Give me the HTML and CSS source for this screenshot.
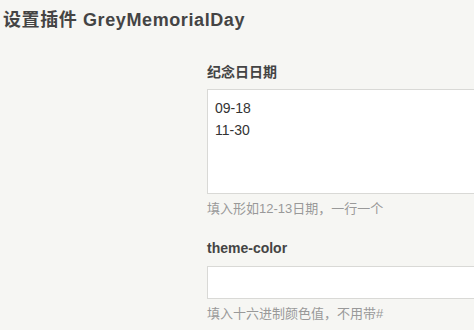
FILE: index.html
```
<!DOCTYPE html>
<html lang="zh-CN">
<head>
<meta charset="UTF-8" />
<title>设置插件 GreyMemorialDay</title>
<link rel="stylesheet" href="styles.css">
</head>
<body>
<h2 class="page-title">设置插件 GreyMemorialDay</h2>

<form class="config-form">
  <ul class="option">
    <li>
      <label class="option-label" for="dates">纪念日日期</label>
      <textarea id="dates" class="option-text">09-18
11-30</textarea>
      <p class="description">填入形如12-13日期，一行一个</p>
    </li>
    <li>
      <label class="option-label" for="themeColor">theme-color</label>
      <input type="text" id="themeColor" class="option-input" />
      <p class="description">填入十六进制颜色值，不用带#</p>
    </li>
  </ul>
</form>
</body>
</html>
```
FILE: styles.css
```
html, body {
  overflow: hidden;
}
body {
  margin: 0;
  background: #f6f6f3;
  color: #444;
  font-family: "Liberation Sans", Arial, "Noto Sans CJK SC", sans-serif;
  font-size: 14px;
}
.page-title {
  margin: 8px 0 0 0;
  padding-left: 3px;
  font-size: 18px;
  line-height: 24px;
  letter-spacing: 0.6px;
  font-weight: bold;
  color: #444;
}
.config-form {
  margin: 30px 0 0 207px;
  width: 320px;
}
.option {
  list-style: none;
  margin: 0;
  padding: 0;
}
.option li + li {
  margin-top: 20px;
}
.option-label {
  display: block;
  font-weight: bold;
  line-height: 20px;
  margin-bottom: 7px;
}
.option li + li .option-label {
  margin-bottom: 8px;
}
.option-text, .option-input {
  display: block;
  width: 100%;
  box-sizing: border-box;
  margin: 0;
  border: 1px solid #d9d9d6;
  background: #fff;
  color: #333;
  font-family: "Liberation Sans", Arial, sans-serif;
  font-size: 14px;
  outline: none;
}
.option-text {
  height: 105px;
  padding: 7px 7px;
  line-height: 22px;
  resize: none;
}
.option-input {
  height: 33px;
  padding: 0 7px;
}
.description {
  margin: 6px 0 0 0;
  font-size: 13px;
  line-height: 18px;
  color: #999;
}
```
